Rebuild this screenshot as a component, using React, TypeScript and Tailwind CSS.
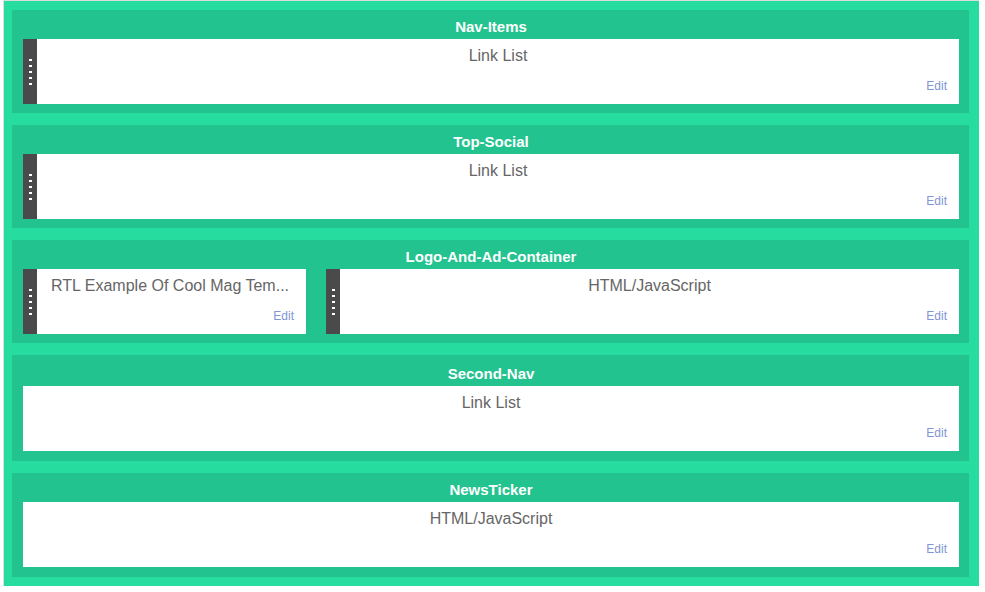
const font = { fontFamily: '"Liberation Sans", Arial, sans-serif' }

type Widget = { title: string; handle?: boolean; align?: "left" | "center"; grow?: boolean; width?: string }

const sections: { name: string; head: string; box: string; widgets: Widget[] }[] = [
  { name: "Nav-Items", head: "h-[29px] pt-[8px]", box: "h-[103px] pb-[9px]", widgets: [{ title: "Link List", handle: true, grow: true }] },
  { name: "Top-Social", head: "h-[29px] pt-[8px]", box: "h-[103px] pb-[9px]", widgets: [{ title: "Link List", handle: true, grow: true }] },
  {
    name: "Logo-And-Ad-Container",
    head: "h-[29px] pt-[8px]",
    box: "h-[103px] pb-[9px]",
    widgets: [
      { title: "RTL Example Of Cool Mag Tem...", handle: true, align: "left", width: "w-[283px]" },
      { title: "HTML/JavaScript", handle: true, grow: true },
    ],
  },
  { name: "Second-Nav", head: "h-[31px] pt-[10px]", box: "h-[106px] pb-[10px]", widgets: [{ title: "Link List", grow: true }] },
  { name: "NewsTicker", head: "h-[29px] pt-[8px]", box: "h-[104px] pb-[10px]", widgets: [{ title: "HTML/JavaScript", grow: true }] },
]

function DragHandle() {
  return (
    <div className="flex w-[14px] shrink-0 flex-col items-center justify-center gap-[4px] bg-[#4a4a4a]">
      {[0, 1, 2, 3, 4].map((i) => (
        <span key={i} className="block h-[2px] w-[3px] bg-white" />
      ))}
    </div>
  )
}

function WidgetBox({ w }: { w: Widget }) {
  return (
    <div className={`flex h-[65px] bg-white ${w.grow ? "flex-1" : "shrink-0"} ${w.width ?? ""}`}>
      {w.handle && <DragHandle />}
      <div className="flex min-w-0 flex-1 flex-col">
        <div
          className={`pt-[7px] text-[16px] leading-[20px] whitespace-nowrap text-[#666666] ${
            w.align === "left" ? "pl-[14px] text-left" : "text-center"
          }`}
        >
          {w.title}
        </div>
        <div className="mt-auto pr-[12px] pb-[11px] text-right text-[12px] leading-[14px] text-[#8194d4]">Edit</div>
      </div>
    </div>
  )
}

export default function App() {
  return (
    <div className="min-h-[592px] bg-white" style={font}>
      <div className="ml-[3px] flex w-[976px] flex-col gap-[12px] border-t border-l border-[#d9dedc] bg-[#26dc9e] pt-[9px] pr-[10px] pb-[9px] pl-[8px]">
        {sections.map((s) => (
          <div key={s.name} className={`flex flex-col bg-[#22c38e] pr-[10px] pl-[11px] ${s.box}`}>
            <div className={`text-center text-[15px] leading-[18px] font-bold text-white ${s.head}`}>{s.name}</div>
            <div className="flex gap-[20px]">
              {s.widgets.map((w, i) => (
                <WidgetBox key={i} w={w} />
              ))}
            </div>
          </div>
        ))}
      </div>
    </div>
  )
}
